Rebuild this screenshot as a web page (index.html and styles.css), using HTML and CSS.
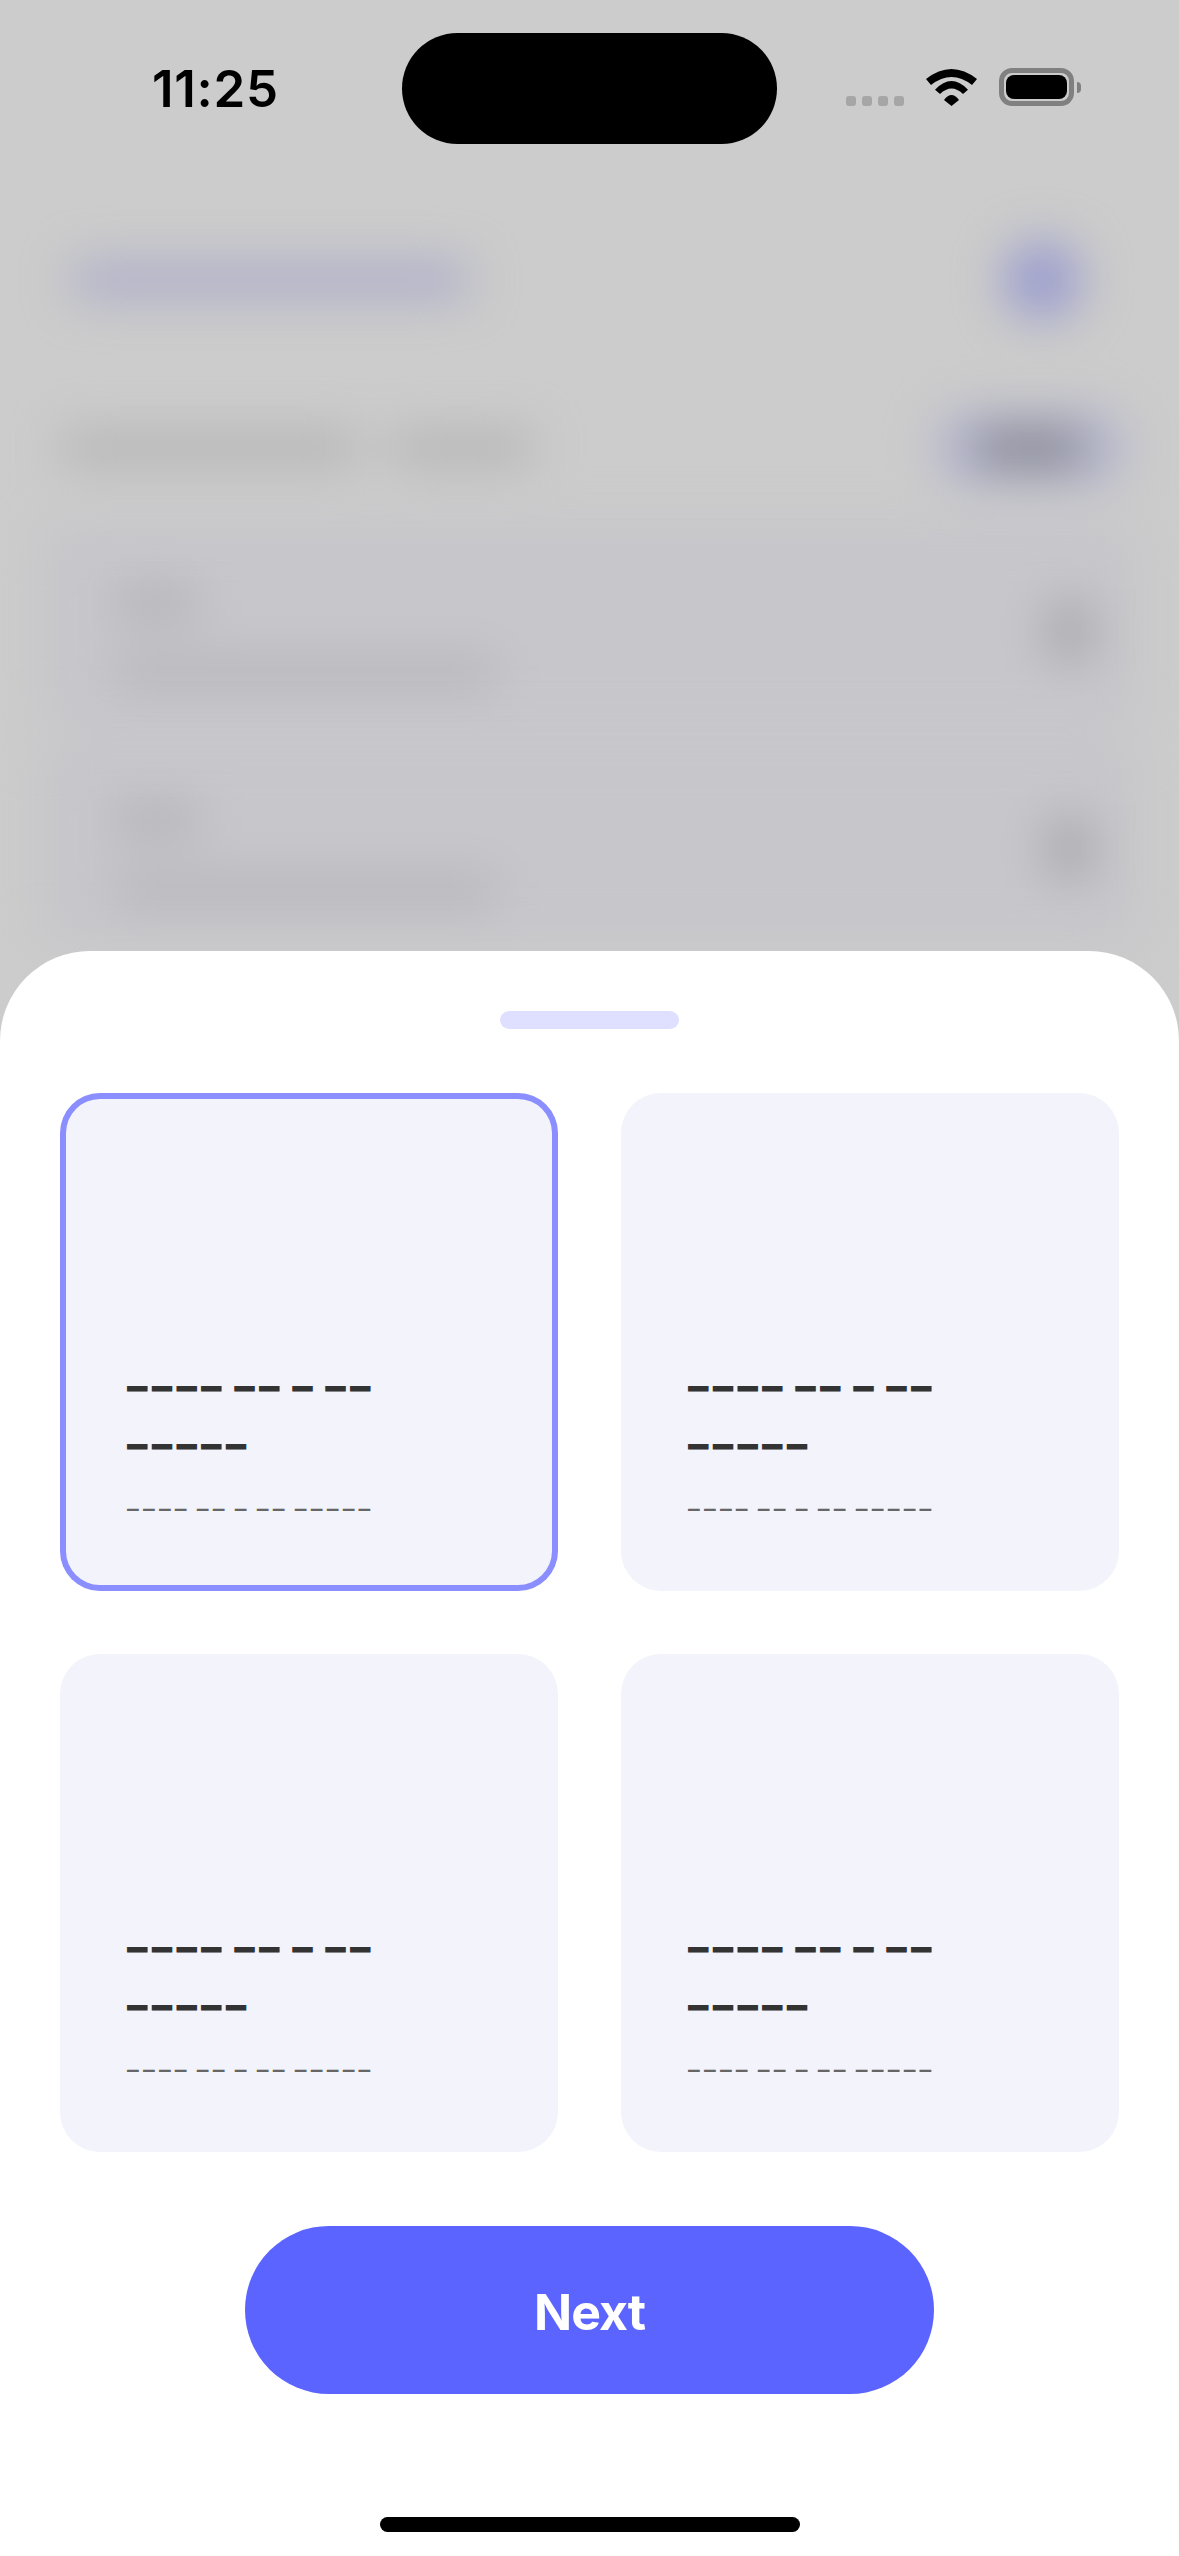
FILE: index.html
```html
<!DOCTYPE html>
<html lang="en">
<head>
<meta charset="utf-8">
<title>Choose an option</title>
<link rel="stylesheet" href="styles.css">
</head>
<body>
<div class="screen">
  <div class="backdrop" aria-hidden="true">
    <div class="bd-header">
      <div class="bd-title"></div>
      <div class="bd-avatar"></div>
    </div>
    <div class="bd-filter">
      <div class="bd-filter-a"></div>
      <div class="bd-filter-b"></div>
      <div class="bd-pill"><div class="bd-pill-text"></div></div>
    </div>
    <div class="bd-list">
      <div class="bd-row">
        <div class="bd-copy"><div class="bd-label"></div><div class="bd-line"></div></div>
        <div class="bd-dot"></div>
      </div>
      <div class="bd-row">
        <div class="bd-copy"><div class="bd-label"></div><div class="bd-line"></div></div>
        <div class="bd-dot"></div>
      </div>
    </div>
  </div>

  <header class="status">
    <div class="time">11:25</div>
    <div class="island"></div>
    <div class="status-icons">
      <div class="signal"><i></i><i></i><i></i><i></i></div>
      <svg class="wifi" viewBox="0 0 51 37" width="51" height="37">
        <path d="M0 10Q25.5-10 51 10L46 16Q25.500 0 5 16Z"/>
        <path d="M9 20.700Q25.500 3.300 42 20.700L37 25Q25.500 14 14 25Z"/>
        <path d="M18 31Q25.500 21 33 31L25.500 37Z"/>
      </svg>
      <div class="battery"><div class="battery-fill"></div></div>
      <div class="battery-nub"></div>
    </div>
  </header>

  <section class="sheet">
    <div class="handle"></div>
    <div class="cards">
      <article class="card card-selected">
        <p class="card-title">–––– –– – ––<br>–––––</p>
        <p class="card-sub">–––– –– – –– –––––</p>
      </article>
      <article class="card">
        <p class="card-title">–––– –– – ––<br>–––––</p>
        <p class="card-sub">–––– –– – –– –––––</p>
      </article>
      <article class="card">
        <p class="card-title">–––– –– – ––<br>–––––</p>
        <p class="card-sub">–––– –– – –– –––––</p>
      </article>
      <article class="card">
        <p class="card-title">–––– –– – ––<br>–––––</p>
        <p class="card-sub">–––– –– – –– –––––</p>
      </article>
    </div>
    <button class="next" type="button">Next</button>
    <div class="home"></div>
  </section>
</div>
</body>
</html>
```
FILE: styles.css
```css
* { box-sizing: border-box; }
html, body { margin: 0; padding: 0; }
body { width: 1179px; height: 2556px; overflow: hidden; background: #cccccc; font-family: Inter, "Liberation Sans", sans-serif; }

.screen { position: relative; width: 1179px; height: 2556px; overflow: hidden; display: flex; flex-direction: column; justify-content: space-between; background: #cccccc; }

/* blurred page behind the sheet */
.backdrop { position: absolute; inset: 0; filter: blur(24px); padding: 240px 40px 0; display: flex; flex-direction: column; }
.bd-header { display: flex; justify-content: space-between; align-items: center; height: 80px; padding: 0 58px 0 32px; }
.bd-title { width: 396px; height: 34px; background: #aaabc8; border-radius: 10px; }
.bd-avatar { width: 78px; height: 78px; border-radius: 50%; background: #9a9ccd; }
.bd-filter { display: flex; align-items: center; height: 74px; margin-top: 91px; padding: 0 14px 0 22px; }
.bd-filter-a { width: 296px; height: 30px; background: #b1b1b1; }
.bd-filter-b { width: 140px; height: 30px; margin-left: 34px; background: #b1b1b1; }
.bd-pill { margin-left: auto; width: 190px; height: 74px; border-radius: 37px; background: #b3b4ce; display: flex; align-items: center; justify-content: center; }
.bd-pill-text { width: 104px; height: 34px; background: #84848c; }
.bd-list { margin-top: 38px; display: flex; flex-direction: column; gap: 12px; }
.bd-row { height: 205px; background: #c6c6cb; border-radius: 30px; display: flex; align-items: center; justify-content: space-between; padding: 0 42px 0 74px; }
.bd-copy { display: flex; flex-direction: column; gap: 40px; margin-top: 24px; }
.bd-label { width: 84px; height: 30px; background: #b1b1b5; }
.bd-line { width: 382px; height: 30px; background: #b5b5b9; }
.bd-dot { width: 54px; height: 68px; margin-top: 10px; border-radius: 50%; background: #a9a9ae; }

/* status bar */
.status { position: relative; display: grid; grid-template-columns: 402px 375px 1fr; height: 144px; padding-top: 33px; }
.time { padding-left: 152px; padding-top: 26px; font-size: 51px; line-height: 60px; font-weight: 600; color: #000; letter-spacing: 0.7px; white-space: nowrap; }
.island { height: 111px; background: #000; border-radius: 56px; }
.status-icons { display: flex; align-items: flex-end; height: 73px; padding-left: 69px; }
.signal { display: flex; gap: 6px; }
.signal i { display: block; width: 10px; height: 10px; border-radius: 3px; background: #a6a6a6; }
.wifi { display: block; margin-left: 22px; fill: #000; }
.battery { width: 75px; height: 38px; margin-left: 22px; border: 5px solid #808080; border-radius: 13px; padding: 2px; }
.battery-fill { width: 100%; height: 100%; background: #000; border-radius: 8px; }
.battery-nub { width: 4px; height: 11px; margin: 0 0 13px 3px; background: #808080; border-radius: 0 6px 6px 0; }

/* sheet */
.sheet { position: relative; height: 1605px; background: #fff; border-radius: 90px 90px 0 0; padding-top: 60px; display: flex; flex-direction: column; align-items: center; }
.handle { width: 179px; height: 18px; background: #dfe0ff; border-radius: 9px; }
.cards { margin-top: 64px; display: grid; grid-template-columns: 498px 498px; grid-auto-rows: 498px; gap: 63px; }
.card { background: #f2f3fb; border-radius: 40px; padding: 0 0 67px 67px; display: flex; flex-direction: column; justify-content: flex-end; }
.card-selected { box-shadow: inset 0 0 0 6px #8a8eff; }
.card-title { margin: 0; font-size: 41px; line-height: 58px; font-weight: 800; color: #333; letter-spacing: 4.2px; word-spacing: -4.7px; white-space: nowrap; }
.card-sub { margin: 21px 0 0; font-size: 23.5px; line-height: 30px; font-weight: 500; color: #666; letter-spacing: 4.2px; word-spacing: -4.4px; white-space: nowrap; }

.next { margin-top: 74px; width: 689px; height: 168px; border: 0; padding: 4px 0 0; border-radius: 84px; background: #5b64ff; color: #fff; font-family: Inter, "Liberation Sans", sans-serif; font-size: 50px; font-weight: 700; letter-spacing: -1px; }
.home { margin-top: 123px; width: 420px; height: 15px; background: #000; border-radius: 8px; }
```
